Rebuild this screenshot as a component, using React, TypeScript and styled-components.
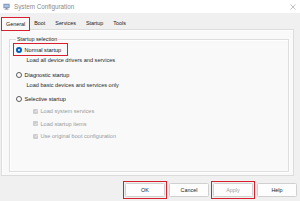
import React from 'react';
import styled, { createGlobalStyle } from 'styled-components';

const GlobalStyle = createGlobalStyle`
  html, body {
    margin: 0;
    padding: 0;
    background: #f0f0f0;
  }
  body {
    font-family: "Liberation Sans", Arial, sans-serif;
    -webkit-font-smoothing: antialiased;
  }
`;

const tabs = ['General', 'Boot', 'Services', 'Startup', 'Tools'];

const Window = styled.div`
  width: 300px;
  height: 201px;
  overflow: hidden;
  display: flex;
  flex-direction: column;
  background: #f0f0f0;
`;

const TitleBar = styled.div`
  height: 13px;
  background: #ffffff;
  display: flex;
  align-items: center;
  padding: 0 4px 0 3px;
  gap: 4px;
  flex-shrink: 0;
`;

const Title = styled.span`
  flex: 1;
  font-size: 6.3px;
  color: #8a8a8a;
  line-height: 13px;
  white-space: nowrap;
`;

const TabRow = styled.div`
  height: 16px;
  display: flex;
  align-items: flex-end;
  padding-left: 2px;
  flex-shrink: 0;
`;

const Tab = styled.div<{ $active?: boolean }>`
  position: relative;
  z-index: 1;
  height: ${p => (p.$active ? '12px' : '11px')};
  padding: 0 ${p => (p.$active ? '4px' : '5px')};
  margin-bottom: ${p => (p.$active ? '-1px' : '0')};
  font-size: 5.4px;
  line-height: ${p => (p.$active ? '12px' : '11px')};
  color: #1a1a1a;
  background: ${p => (p.$active ? '#f9f9f9' : 'transparent')};
  outline: ${p => (p.$active ? '1.5px solid #d7202c' : 'none')};
  outline-offset: 0.5px;
  white-space: nowrap;
`;

const Panel = styled.div`
  margin-left: 1px;
  width: 293px;
  height: 147px;
  border: 1px solid #dcdcdc;
  background: #f9f9f9;
  padding: 6px 4px 0 7px;
  box-sizing: border-box;
  box-shadow: inset 1px 1px 0 #ffffff;
  flex-shrink: 0;
`;

const Group = styled.fieldset`
  margin: 0;
  padding: 1px 0 0 4px;
  height: 136px;
  box-sizing: border-box;
  border: 1px solid #dedede;
  box-shadow: 1px 1px 0 #ffffff, inset 1px 1px 0 #ffffff;
  display: flex;
  flex-direction: column;
`;

const Legend = styled.legend`
  padding: 0 1px;
  margin-left: 2px;
  font-size: 5.4px;
  line-height: 7px;
  color: #1a1a1a;
`;

const Block = styled.div<{ $gap: number }>`
  display: flex;
  flex-direction: column;
  margin-bottom: ${p => p.$gap}px;
`;

const OptionRow = styled.div<{ $marked?: boolean }>`
  align-self: flex-start;
  height: 11px;
  display: flex;
  align-items: center;
  gap: 2.5px;
  padding: 0 ${p => (p.$marked ? '6px' : '2px')} 0 2px;
  font-size: 5.6px;
  color: #1a1a1a;
  outline: ${p => (p.$marked ? '1.5px solid #d7202c' : 'none')};
  outline-offset: 0.5px;
`;

const Radio = styled.span<{ $checked?: boolean }>`
  width: 6px;
  height: 6px;
  border-radius: 50%;
  box-sizing: border-box;
  flex-shrink: 0;
  background: #ffffff;
  border: ${p => (p.$checked ? '2px solid #005fb8' : '0.7px solid #5a5a5a')};
`;

const Description = styled.div`
  height: 11px;
  line-height: 11px;
  padding-left: 12.5px;
  font-size: 5.6px;
  color: #2a2a2a;
`;

const CheckList = styled.div`
  display: flex;
  flex-direction: column;
  padding-left: 19px;
`;

const CheckRow = styled.div`
  height: 12.5px;
  display: flex;
  align-items: center;
  gap: 2.5px;
  font-size: 5.6px;
  color: #9a9a9a;
`;

const Check = styled.span`
  width: 5px;
  height: 5px;
  border-radius: 1px;
  background: #cdcdcd;
  display: flex;
  align-items: center;
  justify-content: center;
`;

const Footer = styled.div`
  display: flex;
  justify-content: flex-end;
  gap: 4px;
  padding: 7px 3px 0 0;
`;

const Button = styled.div<{ $marked?: boolean; $disabled?: boolean }>`
  position: relative;
  width: 40px;
  height: 14px;
  box-sizing: border-box;
  border: 0.7px solid #d0d0d0;
  border-radius: 1.5px;
  background: #fdfdfd;
  font-size: 5.4px;
  line-height: 13px;
  text-align: center;
  color: ${p => (p.$disabled ? '#a0a0a0' : '#1a1a1a')};

  &::after {
    content: '';
    display: ${p => (p.$marked ? 'block' : 'none')};
    position: absolute;
    inset: -3px;
    border: 1.5px solid #d7202c;
  }
`;

const AppIcon = () => (
  <svg width="7" height="7" viewBox="0 0 7 7">
    <rect x="0.5" y="0.8" width="6" height="4.4" fill="#6d7f99" />
    <rect x="1.2" y="1.5" width="4.6" height="3" fill="#a9c3e6" />
    <rect x="2.5" y="5.2" width="2" height="0.8" fill="#6d7f99" />
    <rect x="1.5" y="6" width="4" height="0.6" fill="#8c8c8c" />
  </svg>
);

const CloseIcon = () => (
  <svg width="6" height="6" viewBox="0 0 6 6">
    <path d="M0.5 0.5 L5.5 5.5 M5.5 0.5 L0.5 5.5" stroke="#9a9a9a" strokeWidth="0.6" />
  </svg>
);

const Tick = () => (
  <svg width="4" height="4" viewBox="0 0 4 4">
    <path d="M0.6 2.1 L1.6 3 L3.4 1" stroke="#ffffff" strokeWidth="0.6" fill="none" />
  </svg>
);

export default function App() {
  return (
    <Window>
      <GlobalStyle />
      <TitleBar>
        <AppIcon />
        <Title>System Configuration</Title>
        <CloseIcon />
      </TitleBar>
      <TabRow>
        {tabs.map((t, i) => (
          <Tab key={t} $active={i === 0}>{t}</Tab>
        ))}
      </TabRow>
      <Panel>
        <Group>
          <Legend>Startup selection</Legend>
          <Block $gap={3}>
            <OptionRow $marked>
              <Radio $checked />
              Normal startup
            </OptionRow>
            <Description>Load all device drivers and services</Description>
          </Block>
          <Block $gap={2}>
            <OptionRow>
              <Radio />
              Diagnostic startup
            </OptionRow>
            <Description>Load basic devices and services only</Description>
          </Block>
          <Block $gap={1}>
            <OptionRow>
              <Radio />
              Selective startup
            </OptionRow>
          </Block>
          <CheckList>
            {['Load system services', 'Load startup items', 'Use original boot configuration'].map(c => (
              <CheckRow key={c}>
                <Check><Tick /></Check>
                {c}
              </CheckRow>
            ))}
          </CheckList>
        </Group>
      </Panel>
      <Footer>
        <Button $marked>OK</Button>
        <Button>Cancel</Button>
        <Button $marked $disabled>Apply</Button>
        <Button>Help</Button>
      </Footer>
    </Window>
  );
}
